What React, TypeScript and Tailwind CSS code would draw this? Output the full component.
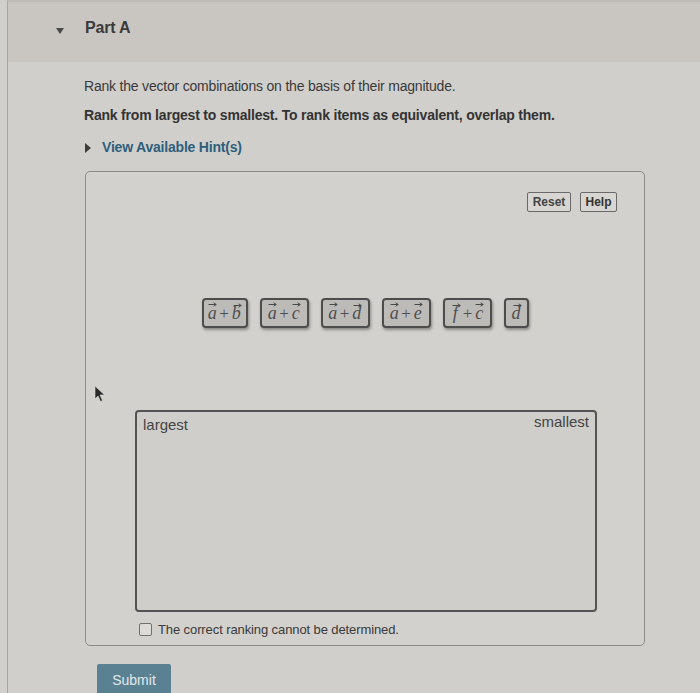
import React from "react";

function Arrow() {
  return (
    <svg width="9" height="5" viewBox="0 0 9 5" className="block">
      <path d="M0.5 2.5 H8" stroke="#4a4a4a" strokeWidth="1" />
      <path d="M5.6 0.8 L8.3 2.5 L5.6 4.2" stroke="#4a4a4a" strokeWidth="1" fill="none" />
    </svg>
  );
}

function Vec({ l, tall }: { l: string; tall?: boolean }) {
  return (
    <span className="inline-flex flex-col items-center">
      <span className={tall ? "mb-[-1px] ml-[2px]" : "mb-[0px] ml-[1px]"}>
        <Arrow />
      </span>
      <span className="italic leading-[13px] text-[18px]">{l}</span>
    </span>
  );
}

function Tile({ children, w }: { children: React.ReactNode; w: string }) {
  return (
    <div
      className={`${w} h-[30px] flex items-end justify-center pb-[6px] bg-[#bdbbb8] border-2 border-[#4d4d4d] rounded-[4px] shadow-[1px_2px_3px_rgba(0,0,0,0.35)] text-[#4f4f4f]`}
      style={{ fontFamily: '"Liberation Serif", "DejaVu Serif", serif' }}
    >
      {children}
    </div>
  );
}

function Plus() {
  return <span className="mx-[2px] text-[17px] leading-[13px]">+</span>;
}

export default function App() {
  return (
    <div
      className="w-[700px] h-[693px] overflow-hidden bg-[#d1cfcb] text-[#333]"
      style={{ fontFamily: '"Liberation Sans", Arial, sans-serif' }}
    >
      <div className="ml-[7px] h-full border-l border-[#a8a6a2] border-t-2 border-t-[#bfbcb8] relative">
        {/* header */}
        <div className="h-[60px] bg-[#c9c6c2] flex items-start pt-[16px]">
          <div className="ml-[48px] mt-[10px] w-0 h-0 border-l-[4px] border-r-[4px] border-t-[6px] border-l-transparent border-r-transparent border-t-[#4a4a4a]" />
          <span className="ml-[21px] text-[16px] leading-[20px] font-semibold text-[#3a3a3a] tracking-[-0.2px]">Part A</span>
        </div>

        <div className="pl-[76px]">
          <p className="mt-[15px] text-[14px] leading-[18px] text-[#3a3a3a] tracking-[-0.2px]">
            Rank the vector combinations on the basis of their magnitude.
          </p>
          <p className="mt-[11px] text-[14px] leading-[18px] font-bold text-[#333] tracking-[-0.2px]">
            Rank from largest to smallest. To rank items as equivalent, overlap them.
          </p>
          <div className="mt-[13px] flex items-center">
            <div className="ml-[1px] w-0 h-0 border-t-[5px] border-b-[5px] border-l-[6px] border-t-transparent border-b-transparent border-l-[#3d3d3d]" />
            <span className="ml-[11px] text-[14px] font-bold text-[#2d5f7c] tracking-[-0.2px]">View Available Hint(s)</span>
          </div>

          {/* panel */}
          <div className="mt-[13px] ml-[1px] w-[560px] h-[475px] border border-[#8d8b88] rounded-[5px] bg-[#d3d1cd] flex flex-col">
            <div className="pt-[20px] pr-[27px] flex justify-end gap-[9px]">
              <button className="w-[44px] h-[20px] border border-[#6a6a6a] rounded-[2px] bg-[#d8d6d2] text-[12px] font-bold text-[#444]">
                Reset
              </button>
              <button className="w-[37px] h-[20px] border border-[#6a6a6a] rounded-[2px] bg-[#d8d6d2] text-[12px] font-bold text-[#333]">
                Help
              </button>
            </div>

            <div className="mt-[86px] flex justify-center gap-[12px]">
              <Tile w="w-[46px]">
                <Vec l="a" />
                <Plus />
                <Vec l="b" tall />
              </Tile>
              <Tile w="w-[49px]">
                <Vec l="a" />
                <Plus />
                <Vec l="c" />
              </Tile>
              <Tile w="w-[49px]">
                <Vec l="a" />
                <Plus />
                <Vec l="d" tall />
              </Tile>
              <Tile w="w-[49px]">
                <Vec l="a" />
                <Plus />
                <Vec l="e" />
              </Tile>
              <Tile w="w-[49px]">
                <Vec l="f" tall />
                <Plus />
                <Vec l="c" />
              </Tile>
              <Tile w="w-[25px]">
                <Vec l="d" tall />
              </Tile>
            </div>

            <div className="mt-[82px] ml-[49px] w-[462px] h-[202px] border-2 border-[#545454] rounded-[4px] bg-[#d0cecb] flex justify-between px-[6px] pt-[3px]">
              <span className="text-[15px] text-[#444] leading-[18px] mt-[1px]">largest</span>
              <span className="text-[15px] text-[#444] leading-[18px] -mt-[2px]">smallest</span>
            </div>

            <div className="mt-[8px] ml-[53px] flex items-center">
              <div className="w-[13px] h-[13px] border border-[#707070] rounded-[2px] bg-[#dddbd8]" />
              <span className="ml-[6px] text-[13px] text-[#3a3a3a] tracking-[-0.1px]">
                The correct ranking cannot be determined.
              </span>
            </div>
          </div>

          <button className="mt-[18px] ml-[13px] w-[74px] h-[32px] bg-[#5a8192] rounded-[2px] text-[14px] text-[#e3e8ea]">
            Submit
          </button>
        </div>

        {/* mouse cursor */}
        <svg
          className="absolute left-[86px] top-[383px]"
          width="12"
          height="18"
          viewBox="0 0 12 18"
        >
          <path d="M1 1 L1 14 L4 11 L6.5 16.5 L8.5 15.5 L6 10 L10.5 10 Z" fill="#2a2a2a" stroke="#ddd" strokeWidth="0.6" />
        </svg>
      </div>
    </div>
  );
}
